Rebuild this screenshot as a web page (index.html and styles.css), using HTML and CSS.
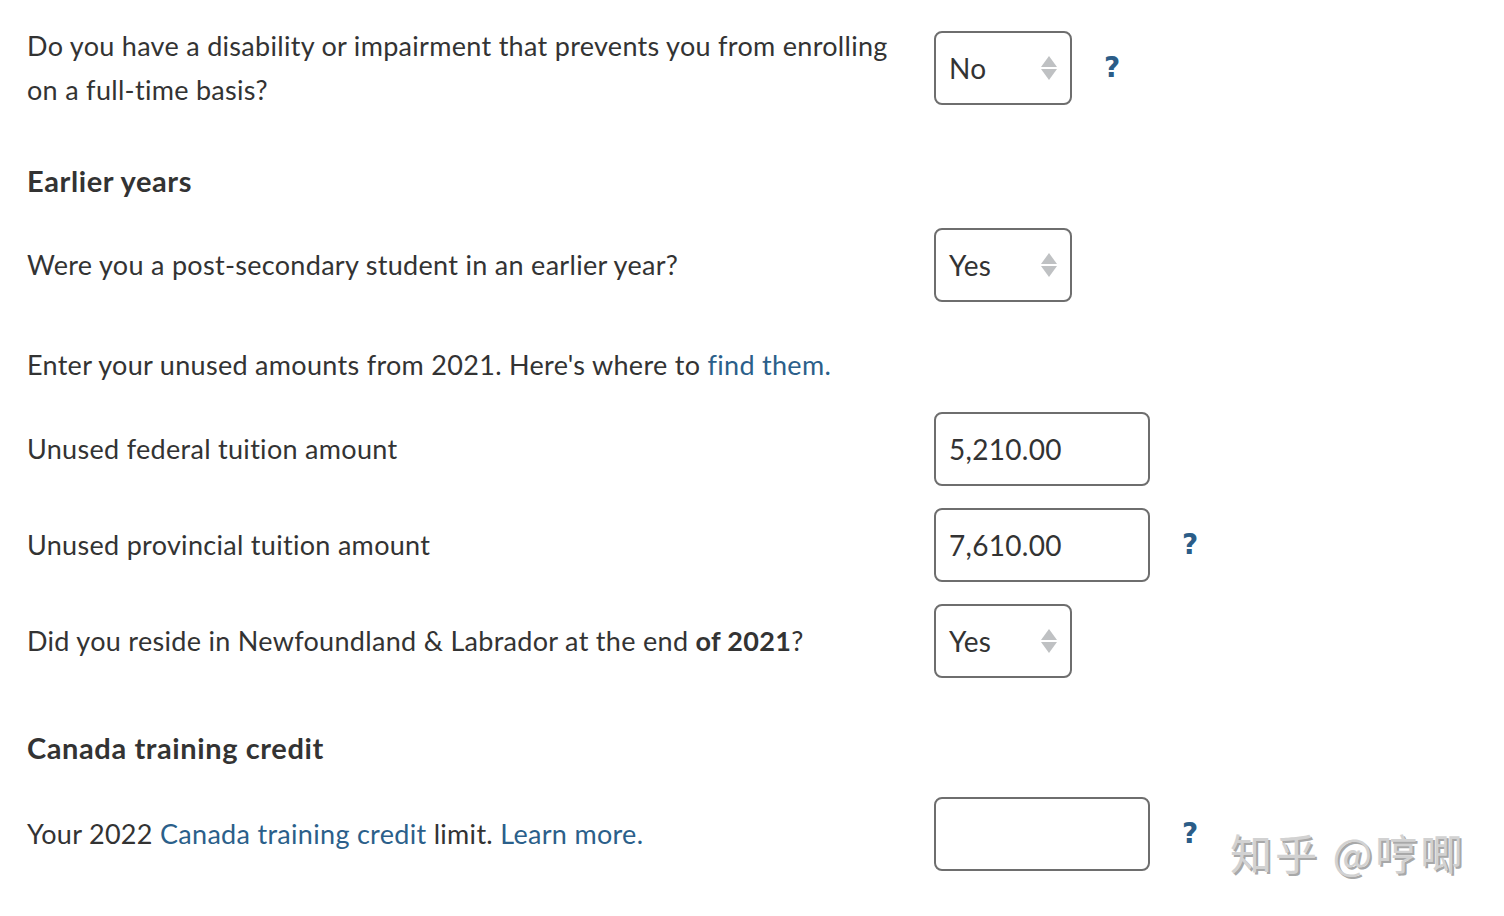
FILE: index.html
```html
<!DOCTYPE html>
<html>
<head>
<meta charset="utf-8">
<link rel="stylesheet" href="styles.css">
</head>
<body>
<main class="form">
  <div class="row row-first">
    <div class="label label-wrap">Do you have a disability or impairment that prevents you from enrolling on a full-time basis?</div>
    <div class="select"><span>No</span><span class="arrows"><i class="up"></i><i class="down"></i></span></div>
    <span class="help">?</span>
  </div>

  <h2 class="heading h-earlier">Earlier years</h2>

  <div class="row">
    <div class="label">Were you a post-secondary student in an earlier year?</div>
    <div class="select"><span>Yes</span><span class="arrows"><i class="up"></i><i class="down"></i></span></div>
  </div>

  <p class="para">Enter your unused amounts from 2021. Here's where to <a class="link">find them.</a></p>

  <div class="row row-tight">
    <div class="label">Unused federal tuition amount</div>
    <div class="input">5,210.00</div>
  </div>

  <div class="row row-gap">
    <div class="label">Unused provincial tuition amount</div>
    <div class="input">7,610.00</div>
    <span class="help">?</span>
  </div>

  <div class="row row-gap">
    <div class="label">Did you reside in Newfoundland &amp; Labrador at the end <b>of 2021</b>?</div>
    <div class="select"><span>Yes</span><span class="arrows"><i class="up"></i><i class="down"></i></span></div>
  </div>

  <h2 class="heading h-canada">Canada training credit</h2>

  <div class="row row-last">
    <div class="label">Your 2022 <a class="link">Canada training credit</a> limit. <a class="link">Learn more.</a></div>
    <div class="input"></div>
    <span class="help">?</span>
  </div>
</main>
<div class="watermark">知乎 @哼唧</div>
</body>
</html>
```

FILE: styles.css
```css
html, body {
  margin: 0;
  padding: 0;
  background: #ffffff;
}
body {
  font-family: Lato, "Noto Sans", sans-serif;
  color: #333333;
  width: 1504px;
  height: 916px;
  overflow: hidden;
  position: relative;
}
.form {
  padding-left: 27px;
  display: flex;
  flex-direction: column;
}
.row {
  display: flex;
  align-items: center;
}
.row-first { margin-top: 24px; }
.row-tight { margin-top: 25px; }
.row-gap { margin-top: 22px; }
.label {
  box-sizing: border-box;
  width: 907px;
  font-size: 27px;
  line-height: 44px;
  letter-spacing: 0.3px;
  flex: none;
}
.label-wrap { padding-right: 20px; }
.label b { font-weight: 700; }
.select, .input {
  box-sizing: border-box;
  height: 74px;
  border: 2px solid #6e6e6e;
  border-radius: 8px;
  display: flex;
  align-items: center;
  padding-left: 13px;
  font-size: 28px;
  letter-spacing: 0.3px;
  color: #333;
  flex: none;
}
.select {
  width: 138px;
  justify-content: space-between;
  padding-right: 13px;
}
.input { width: 216px; }
.arrows {
  display: flex;
  flex-direction: column;
  gap: 2px;
}
.arrows i {
  display: block;
  width: 0;
  height: 0;
  border-left: 8px solid transparent;
  border-right: 8px solid transparent;
}
.arrows .up { border-bottom: 11px solid #bfc1c3; }
.arrows .down { border-top: 11px solid #bfc1c3; }
.help {
  margin-left: 32px;
  font-family: "DejaVu Sans", sans-serif;
  font-size: 28px;
  line-height: 32px;
  font-weight: 700;
  color: #2b5d88;
}
.heading {
  margin: 0;
  font-size: 29px;
  line-height: 44px;
  letter-spacing: 0.6px;
  font-weight: 700;
  color: #333;
}
.h-earlier { margin-top: 47px; margin-bottom: 25px; }
.h-canada { margin-top: 48px; margin-bottom: 27px; }
.para {
  margin: 41px 0 0 0;
  font-size: 27px;
  line-height: 44px;
  letter-spacing: 0.3px;
}
.link { color: #2b5f8a; text-decoration: none; }
.watermark {
  position: absolute;
  left: 1230px;
  top: 826px;
  font-family: "Noto Sans CJK SC", sans-serif;
  font-size: 42px;
  line-height: 52px;
  color: #d2d2d2;
  text-shadow: 2px 2px 0 #a8a8a8;
  letter-spacing: 3px;
}
```
